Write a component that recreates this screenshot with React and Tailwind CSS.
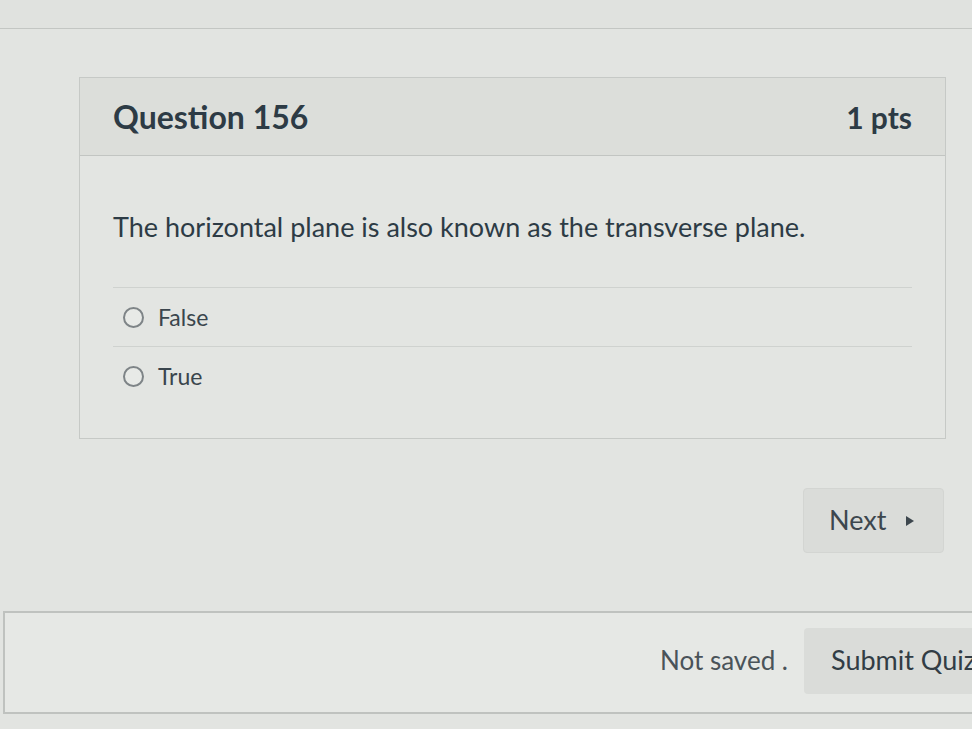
export default function App() {
  const font = { fontFamily: "Lato, 'Noto Sans', sans-serif" };
  return (
    <div className="w-[972px] h-[729px] overflow-hidden bg-[#e2e4e1] text-[#2d3b45]" style={font}>
      <div className="h-[29px] border-b border-[#c3c6c3] bg-[#e0e2df]" />
      <div className="pl-[79px] pr-[26px] pt-[48px]">
        <div className="border border-[#c6c9c6] bg-[#e3e5e2]">
          <div className="h-[78px] flex items-center justify-between px-[33px] bg-[#dcdeda] border-b border-[#c2c5c2]">
            <span className="text-[32px] font-bold leading-none">Question 156</span>
            <span className="text-[30px] font-bold leading-none">1 pts</span>
          </div>
          <div className="px-[33px] pt-[54px] pb-[32px]">
            <p className="text-[27px] leading-[34px] text-[#2d3b45]">
              The horizontal plane is also known as the transverse plane.
            </p>
            <div className="mt-[43px] border-t border-[#cfd2cf]">
              <div className="h-[59px] flex items-center border-b border-[#cfd2cf] pl-[10px]">
                <span className="w-[21px] h-[21px] rounded-full border-2 border-[#7e8487] bg-[#e8eae7]" />
                <span className="ml-[14px] text-[23px] text-[#3a454d]">False</span>
              </div>
              <div className="h-[59px] flex items-center pl-[10px]">
                <span className="w-[21px] h-[21px] rounded-full border-2 border-[#7e8487] bg-[#e8eae7]" />
                <span className="ml-[14px] text-[23px] text-[#3a454d]">True</span>
              </div>
            </div>
          </div>
        </div>
        <div className="flex justify-end mt-[49px] pr-[2px]">
          <div className="w-[141px] h-[65px] rounded-[4px] bg-[#dadcd9] border border-[#d3d5d2] flex items-center pl-[25px] gap-[19px]">
            <span className="text-[27px] text-[#3d474e]">Next</span>
            <svg width="10" height="12" viewBox="0 0 10 12"><path d="M1 1 L9 6 L1 11 Z" fill="#3d474e" /></svg>
          </div>
        </div>
      </div>
      <div className="mt-[58px] ml-[3px] h-[103px] pb-[4px] border-t-2 border-l-2 border-b-2 border-[#bfc2bf] bg-[#e6e8e5] flex items-center justify-end">
        <span className="text-[26px] text-[#4a5359] mr-[16px] whitespace-nowrap">Not saved .</span>
        <div className="w-[180px] shrink-0 h-[66px] rounded-l-[4px] bg-[#dadcd9] flex items-center pl-[27px] -mr-[12px]">
          <span className="text-[27px] text-[#323d45] whitespace-nowrap">Submit Quiz</span>
        </div>
      </div>
    </div>
  );
}
